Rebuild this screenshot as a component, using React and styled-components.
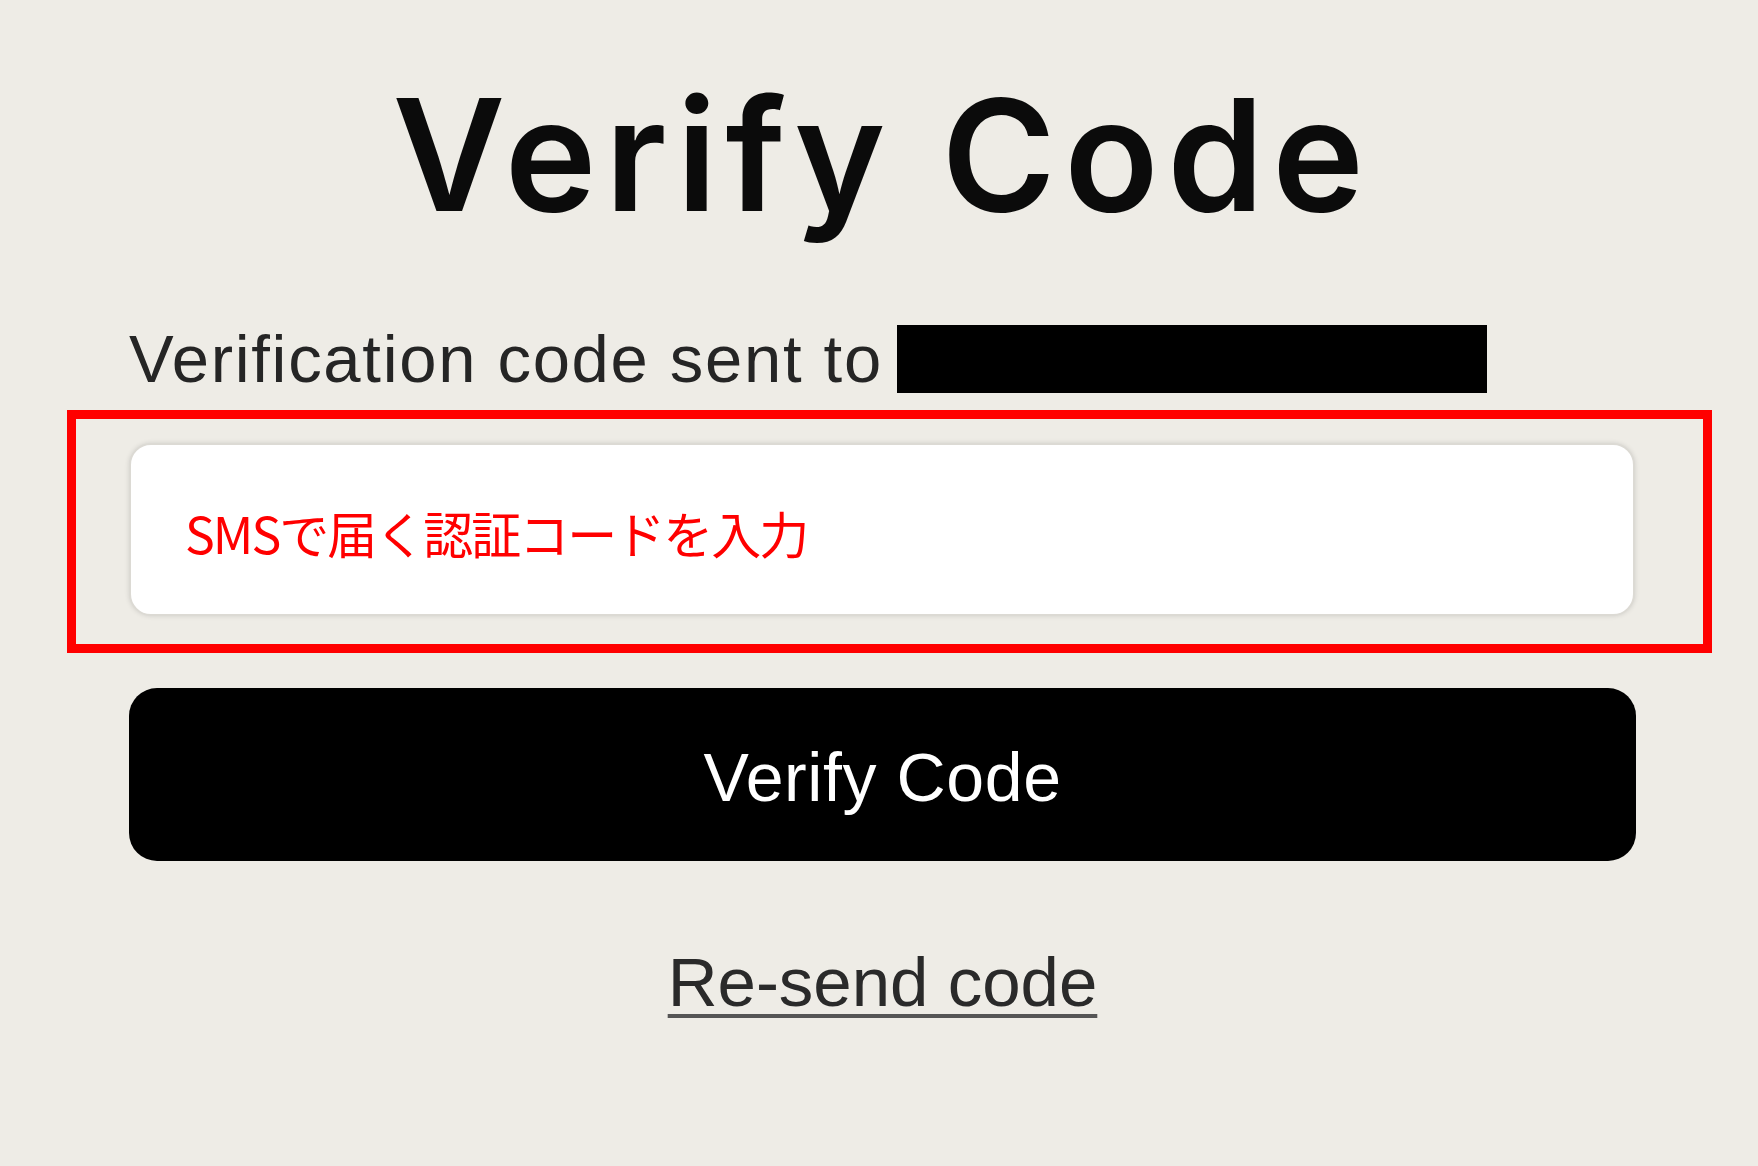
import React from "react";
import styled, { createGlobalStyle } from "styled-components";

const Global = createGlobalStyle`
  html, body { margin: 0; padding: 0; background: #eeece6; }
  body { font-family: "Liberation Sans", Arial, sans-serif; }
  * { box-sizing: border-box; }
`;

const Page = styled.div`
  width: 1758px;
  height: 1166px;
  background: #eeece6;
  overflow: hidden;
`;

const Column = styled.main`
  width: 1507px;
  margin-left: 129px;
  display: flex;
  flex-direction: column;
`;

const Title = styled.h1`
  margin: 77px 0 0;
  font-family: "Inter", "Liberation Sans", sans-serif;
  font-weight: 600;
  font-size: 155px;
  line-height: 155px;
  letter-spacing: 8.5px;
  text-align: center;
  color: #0b0b0b;
`;

const SentRow = styled.div`
  margin-top: 93px;
  height: 68px;
  display: flex;
  align-items: center;
  gap: 14px;
`;

const SentText = styled.span`
  font-size: 67px;
  line-height: 68px;
  color: #252525;
  letter-spacing: 1.7px;
  white-space: nowrap;
`;

const Redacted = styled.span`
  display: block;
  width: 590px;
  height: 68px;
  background: #000;
`;

const Annotation = styled.div`
  margin: 17px -76px 0 -62px;
  border: 9px solid #ff0000;
  padding: 24px 68px 28px 53px;
`;

const CodeInput = styled.input`
  display: block;
  width: 100%;
  height: 173px;
  border: 2px solid #dcdad4;
  border-radius: 22px;
  background: #fff;
  box-shadow: 0 0 5px rgba(0, 0, 0, 0.12);
  padding: 4px 0 0 54px;
  font-family: "Noto Sans CJK JP", sans-serif;
  font-size: 50px;
  letter-spacing: -2px;
  color: #ff0000;
  outline: none;
  &::placeholder { color: #ff0000; opacity: 1; }
`;

const VerifyButton = styled.button`
  margin-top: 35px;
  height: 173px;
  width: 100%;
  border: none;
  border-radius: 28px;
  background: #000;
  color: #fff;
  font-family: "Liberation Sans", Arial, sans-serif;
  font-size: 68px;
  letter-spacing: 0.6px;
  padding: 4px 0 0;
  cursor: pointer;
`;

const Resend = styled.a`
  align-self: center;
  margin-top: 82px;
  font-size: 69px;
  line-height: 80px;
  color: #2a2a2a;
  text-decoration: underline;
  text-decoration-thickness: 4px;
  text-underline-offset: 8px;
  text-decoration-color: #555;
`;

export default function App() {
  return (
    <Page>
      <Global />
      <Column>
        <Title>Verify Code</Title>
        <SentRow>
          <SentText>Verification code sent to</SentText>
          <Redacted />
        </SentRow>
        <Annotation>
          <CodeInput placeholder="SMSで届く認証コードを入力" />
        </Annotation>
        <VerifyButton>Verify Code</VerifyButton>
        <Resend href="#">Re-send code</Resend>
      </Column>
    </Page>
  );
}
